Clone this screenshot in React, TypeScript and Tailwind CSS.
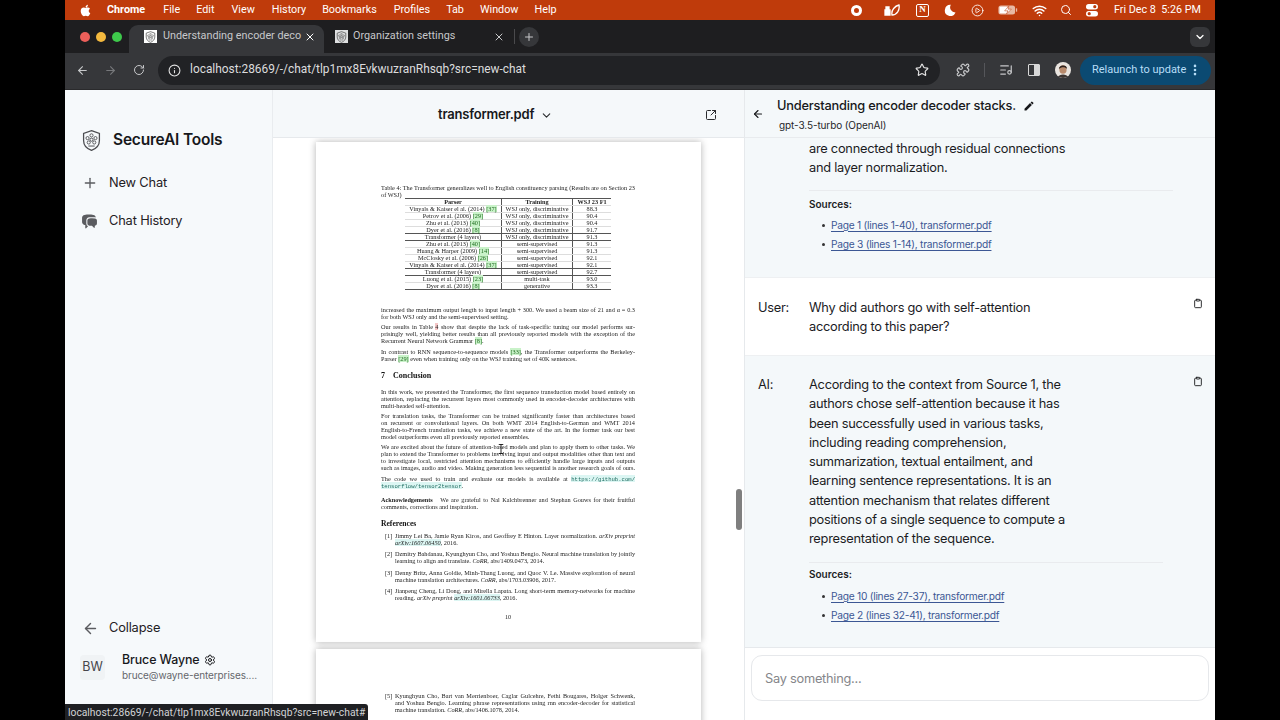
import type { ReactNode } from 'react';
import {
  ArrowLeft,
  ArrowRight,
  ChevronDown,
  CirclePlay,
  Clipboard,
  EllipsisVertical,
  Info,
  ListMusic,
  Plus,
  Puzzle,
  RotateCw,
  Search,
  Settings,
  SquareArrowOutUpRight,
  Star,
  Wifi,
  X,
} from 'lucide-react';
import { FaApple } from 'react-icons/fa';
import { MdEdit } from 'react-icons/md';
import { HiChatBubbleLeftRight } from 'react-icons/hi2';

function ShieldLogo({ className }: { className: string }) {
  return (
    <svg viewBox="0 0 24 28" className={className} fill="none" stroke="currentColor">
      <path d="M12 1.5 L22 5 V14 C22 20 17.5 24.5 12 26.5 C6.5 24.5 2 20 2 14 V5 Z" strokeWidth="1.6" />
      <circle cx="12" cy="13" r="2" strokeWidth="1.2" />
      <circle cx="12" cy="7.5" r="2" strokeWidth="1.1" />
      <circle cx="7" cy="11" r="2" strokeWidth="1.1" />
      <circle cx="17" cy="11" r="2" strokeWidth="1.1" />
      <circle cx="8.5" cy="16.5" r="2" strokeWidth="1.1" />
      <circle cx="15.5" cy="16.5" r="2" strokeWidth="1.1" />
      <path d="M8 21 H16" strokeWidth="1.2" />
    </svg>
  );
}

function MenuBar() {
  return (
    <div className="h-5 shrink-0 bg-[#bf3b0b] text-white flex items-center justify-between pl-[14px] pr-[14px] text-[10.8px] [font-family:Roboto,sans-serif]">
      <div className="flex items-center">
        <FaApple className="w-[13px] h-[13px] mr-[15px]" />
        <span className="font-bold mr-[18px]">Chrome</span>
        <span className="mr-[16px]">File</span>
        <span className="mr-[17px]">Edit</span>
        <span className="mr-[17px]">View</span>
        <span className="mr-[16px]">History</span>
        <span className="mr-[17px]">Bookmarks</span>
        <span className="mr-[16px]">Profiles</span>
        <span className="mr-[16px]">Tab</span>
        <span className="mr-[16px]">Window</span>
        <span>Help</span>
      </div>
      <div className="flex items-center">
        <span className="w-[11px] h-[11px] rounded-full border-[3px] border-white bg-[#bf3b0b] mr-[22px]" />
        <svg viewBox="0 0 16 14" className="w-[16px] h-[14px] mr-[16px]" fill="none" stroke="white" strokeWidth="1.3">
          <path d="M1 7 h5 v5 h-5 z M2 4 h3 v3 h-3 z" fill="white" />
          <path d="M8 12 C7 7 11 3 15 2 C16 7 13 12 8 12 Z" />
        </svg>
        <span className="w-[13px] h-[13px] border border-white rounded-[2px] flex items-center justify-center text-[9px] font-bold [font-family:'Liberation_Serif',serif] mr-[15px]">
          N
        </span>
        <svg viewBox="0 0 14 14" className="w-[12px] h-[12px] mr-[15px]" fill="white">
          <path d="M8 1 A6.5 6.5 0 1 0 13.5 10 A6 6 0 0 1 8 1 Z" />
        </svg>
        <CirclePlay className="w-[13px] h-[13px] mr-[14px]" strokeWidth={1.6} />
        <svg viewBox="0 0 24 12" className="w-[20px] h-[10px] mr-[14px]" fill="none">
          <rect x="0.5" y="0.5" width="20" height="11" rx="3" fill="#e8b9a4" />
          <rect x="2" y="2" width="9" height="8" rx="1" fill="white" />
          <path d="M13 1 L8 7 H12 L10 11 L16 5 H12 Z" fill="white" stroke="#bf3b0b" strokeWidth="0.6" />
          <rect x="21.5" y="4" width="1.5" height="4" fill="#e8b9a4" />
        </svg>
        <Wifi className="w-[15px] h-[15px] mr-[13px]" strokeWidth={2.4} />
        <Search className="w-[12px] h-[12px] mr-[13px]" strokeWidth={2} />
        <svg viewBox="0 0 14 14" className="w-[14px] h-[14px] mr-[15px]" fill="white">
          <rect x="1" y="1" width="12" height="5.5" rx="2.7" />
          <circle cx="9.8" cy="3.7" r="1.6" fill="#bf3b0b" />
          <rect x="1" y="8" width="12" height="5.5" rx="2.7" />
          <circle cx="4.2" cy="10.7" r="1.6" fill="#bf3b0b" />
        </svg>
        <span className="whitespace-nowrap">Fri Dec 8&nbsp; 5:26 PM</span>
      </div>
    </div>
  );
}

function TabStrip() {
  return (
    <div className="h-[33px] shrink-0 bg-[#1e1e20] flex items-end text-[#c7c8ca] text-[10.8px] pl-[15px] pr-[5px] [font-family:Roboto,sans-serif]">
      <div className="flex items-center gap-[6px] h-full mr-[7px]">
        <span className="w-[10px] h-[10px] rounded-full bg-[#ec5f5a]" />
        <span className="w-[10px] h-[10px] rounded-full bg-[#f4b93e]" />
        <span className="w-[10px] h-[10px] rounded-full bg-[#3ec94b]" />
      </div>
      <div className="w-[195px] h-[28px] bg-[#36373a] rounded-t-[9px] flex items-center pl-[15px] pr-[8px] pb-[5px]">
        <span className="w-[13px] h-[13px] bg-white flex items-center justify-center text-[#444] mr-[6px]">
          <ShieldLogo className="w-[11px] h-[12px]" />
        </span>
        <span className="whitespace-nowrap">Understanding encoder deco</span>
        <X className="w-[12px] h-[12px] ml-auto text-white" />
      </div>
      <div className="w-[190px] h-[28px] flex items-center pl-[11px] pr-[9px] pb-[5px]">
        <span className="w-[13px] h-[13px] bg-[#dfe0e1] flex items-center justify-center text-[#444] mr-[5px]">
          <ShieldLogo className="w-[11px] h-[12px]" />
        </span>
        <span className="whitespace-nowrap">Organization settings</span>
        <X className="w-[12px] h-[12px] ml-auto" />
      </div>
      <div className="h-full flex items-center">
        <span className="w-px h-[15px] bg-[#4a4a4c] mr-[4px]" />
        <span className="w-[20px] h-[20px] rounded-full bg-[#36373a] flex items-center justify-center">
          <Plus className="w-[12px] h-[12px]" />
        </span>
      </div>
      <div className="h-full flex items-center ml-auto">
        <span className="w-[20px] h-[20px] rounded-[6px] bg-[#36373a] flex items-center justify-center">
          <ChevronDown className="w-[12px] h-[12px] text-white" strokeWidth={2.5} />
        </span>
      </div>
    </div>
  );
}

function Toolbar() {
  return (
    <div className="h-[37px] shrink-0 bg-[#36373a] border-b border-[#2a2a2c] flex items-center text-[#c7c8ca] pl-[11px] pr-[3px] pb-[2px]">
      <ArrowLeft className="w-[13px] h-[13px] mr-[15px]" strokeWidth={2} />
      <ArrowRight className="w-[13px] h-[13px] mr-[16px] text-[#77787b]" strokeWidth={2} />
      <RotateCw className="w-[12px] h-[12px] mr-[13px]" strokeWidth={2} />
      <div className="w-[782px] h-[29px] rounded-full bg-[#212225] flex items-center pl-[10px] pr-[11px]">
        <Info className="w-[13px] h-[13px] mr-[9px] text-[#e3e3e3]" strokeWidth={2} />
        <span className="text-[11.9px] text-[#dcdcdd] whitespace-nowrap [font-family:Roboto,sans-serif]">
          localhost:28669/-/chat/tlp1mx8EvkwuzranRhsqb?src=new-chat
        </span>
        <Star className="w-[14px] h-[14px] ml-auto text-[#e3e3e3]" strokeWidth={2} />
      </div>
      <Puzzle className="w-[14px] h-[14px] ml-[16px] mr-[14px]" strokeWidth={2} />
      <span className="w-px h-[14px] bg-[#55565a] mr-[14px]" />
      <ListMusic className="w-[14px] h-[14px] mr-[15px]" strokeWidth={2} />
      <span className="w-[12px] h-[12px] border border-[#d8d8d8] rounded-[1px] flex justify-end mr-[15px]">
        <span className="w-[5px] h-full bg-[#d8d8d8]" />
      </span>
      <svg viewBox="0 0 16 16" className="w-[16px] h-[16px] mr-[9px]">
        <circle cx="8" cy="8" r="8" fill="#e9e4df" />
        <ellipse cx="8" cy="7.5" rx="3.6" ry="4.3" fill="#b88a6c" />
        <path d="M4 7 C3.5 2.5 12.5 2 12 7 C10.5 4.5 6 4.5 4 7 Z" fill="#2c211c" />
        <path d="M3 15 C4 11.5 12 11.5 13 15 L8 16 Z" fill="#3d3532" />
      </svg>
      <div className="w-[131px] h-[29px] rounded-full bg-[#0b4a72] text-[#b7def7] flex items-center pl-[12px] text-[11px] whitespace-nowrap [font-family:Roboto,sans-serif]">
        Relaunch to update
        <EllipsisVertical className="w-[14px] h-[14px] ml-[2px]" strokeWidth={2.5} />
      </div>
    </div>
  );
}

function Sidebar() {
  return (
    <aside className="w-[208px] shrink-0 bg-[#f6f9fb] border-r border-[#e9ecef] flex flex-col pl-[17px] relative">
      <div className="flex items-center h-[24px] mt-[38px] text-[#1b1c1f]">
        <ShieldLogo className="w-[19px] h-[23px] text-[#4b4c50]" />
        <span className="ml-[12px] text-[15.5px] tracking-[-0.2px] font-semibold text-[#17181b] whitespace-nowrap">SecureAI Tools</span>
      </div>
      <div className="flex items-center h-[20px] mt-[21px] text-[12.8px] tracking-[-0.15px] text-[#1f2023]">
        <Plus className="w-[16px] h-[16px] text-[#5b5c60]" strokeWidth={2} />
        <span className="ml-[11px]">New Chat</span>
      </div>
      <div className="flex items-center h-[20px] mt-[18px] text-[12.8px] tracking-[-0.15px] text-[#1f2023]">
        <HiChatBubbleLeftRight className="w-[17px] h-[17px] text-[#5b5c60] -ml-[1px]" />
        <span className="ml-[11px]">Chat History</span>
      </div>
      <div className="flex items-center h-[20px] mt-auto text-[12.8px] tracking-[-0.15px] text-[#1f2023]">
        <ArrowLeft className="w-[17px] h-[17px] text-[#5b5c60]" strokeWidth={2} />
        <span className="ml-[10px]">Collapse</span>
      </div>
      <div className="flex items-center h-[32px] mt-[13px] mb-[37px]">
        <span className="w-[25px] h-[25px] -ml-[2px] rounded bg-[#f0f3f5] text-[#45464a] text-[12.5px] flex items-center justify-center">
          BW
        </span>
        <div className="ml-[17px]">
          <div className="flex items-center text-[12.4px] tracking-[-0.1px] font-medium leading-[17px] text-[#17181b] whitespace-nowrap">
            Bruce Wayne
            <Settings className="w-[12px] h-[12px] ml-[5px]" strokeWidth={2} />
          </div>
          <div className="text-[10px] tracking-[-0.1px] leading-[15px] text-[#65676b] whitespace-nowrap">bruce@wayne-enterprises....</div>
        </div>
      </div>
    </aside>
  );
}

function L({ children }: { children: ReactNode }) {
  return <div className="h-[7px] leading-[7px] whitespace-nowrap [text-align:justify] [text-align-last:justify]">{children}</div>;
}

function S({ children }: { children: ReactNode }) {
  return <div className="h-[7px] leading-[7px] whitespace-nowrap">{children}</div>;
}

function G({ children }: { children: ReactNode }) {
  return <span className="bg-[#c9f2c9] text-[#1d6b1d]">{children}</span>;
}

function C({ children }: { children: ReactNode }) {
  return <span className="bg-[#dcf6f3]">{children}</span>;
}

const tableRows = [
  ['Vinyals & Kaiser el al. (2014) ', '37', 'WSJ only, discriminative', '88.3', ''],
  ['Petrov et al. (2006) ', '29', 'WSJ only, discriminative', '90.4', ''],
  ['Zhu et al. (2013) ', '40', 'WSJ only, discriminative', '90.4', ''],
  ['Dyer et al. (2016) ', '8', 'WSJ only, discriminative', '91.7', ''],
  ['Transformer (4 layers)', '', 'WSJ only, discriminative', '91.3', 'line'],
  ['Zhu et al. (2013) ', '40', 'semi-supervised', '91.3', 'line'],
  ['Huang & Harper (2009) ', '14', 'semi-supervised', '91.3', ''],
  ['McClosky et al. (2006) ', '26', 'semi-supervised', '92.1', ''],
  ['Vinyals & Kaiser el al. (2014) ', '37', 'semi-supervised', '92.1', ''],
  ['Transformer (4 layers)', '', 'semi-supervised', '92.7', 'line'],
  ['Luong et al. (2015) ', '23', 'multi-task', '93.0', 'line'],
  ['Dyer et al. (2016) ', '8', 'generative', '93.3', ''],
];

function ParseTable() {
  return (
    <div className="w-[206px] ml-[24px] mt-[0.5px] border-b border-[#555] text-center leading-[6px]">
      <div className="grid grid-cols-[97px_71px_38px] h-[7px] border-t border-[#555] font-bold">
        <span className="border-r border-[#555]">Parser</span>
        <span className="border-r border-[#555]">Training</span>
        <span>WSJ 23 F1</span>
      </div>
      {tableRows.map((row, i) => (
        <div
          key={i}
          className={
            row[4] === 'line'
              ? 'grid grid-cols-[97px_71px_38px] h-[7px] border-t border-[#555] whitespace-nowrap'
              : 'grid grid-cols-[97px_71px_38px] h-[7px] border-t border-[#ddd] whitespace-nowrap'
          }
        >
          <span className="border-r border-[#555]">
            {row[0]}
            {row[1] && <G>[{row[1]}]</G>}
          </span>
          <span className="border-r border-[#555]">{row[2]}</span>
          <span>{row[3]}</span>
        </div>
      ))}
    </div>
  );
}

function Ref({ n, first, children }: { n: string; first: ReactNode; children: ReactNode }) {
  return (
    <div className="flex">
      <span className="w-[14px] pl-[4px] shrink-0 leading-[7px]">[{n}]</span>
      <div className="flex-1 min-w-0">
        <L>{first}</L>
        {children}
      </div>
    </div>
  );
}

function PdfPanel() {
  return (
    <main className="w-[471px] shrink-0 flex flex-col relative overflow-hidden bg-white">
      <div className="h-[48px] shrink-0 bg-[#f5f8fa] border-b border-[#e6e9ec] flex items-center pl-[165px] pt-[3px] relative">
        <span className="text-[13px] tracking-[-0.2px] font-semibold text-[#17181b]">transformer.pdf</span>
        <ChevronDown className="w-[13px] h-[13px] ml-[6px] text-[#2a2b2e]" />
        <SquareArrowOutUpRight className="w-[12px] h-[12px] absolute right-[27px] top-[19px] text-[#2a2b2e]" strokeWidth={2} />
      </div>
      <div className="flex-1 overflow-hidden pt-[4px] [font-family:'Liberation_Serif',serif] text-[6.25px] text-[#1c1c1c]">
        <div className="w-[385px] h-[500px] mx-auto bg-white shadow-[0_0_7px_rgba(0,0,0,0.3)] pl-[65px] pr-[66px] pt-[41.5px] blur-[0.25px]">
          <L>Table 4: The Transformer generalizes well to English constituency parsing (Results are on Section 23</L>
          <S>of WSJ)</S>
          <ParseTable />
          <div className="mt-[16px]">
            <L>increased the maximum output length to input length + 300. We used a beam size of 21 and α = 0.3</L>
            <S>for both WSJ only and the semi-supervised setting.</S>
          </div>
          <div className="mt-[3px]">
            <L>Our results in Table <span className="bg-[#f5c6c6]">4</span> show that despite the lack of task-specific tuning our model performs sur-</L>
            <L>prisingly well, yielding better results than all previously reported models with the exception of the</L>
            <S>Recurrent Neural Network Grammar <G>[8]</G>.</S>
          </div>
          <div className="mt-[4px]">
            <L>In contrast to RNN sequence-to-sequence models <G>[33]</G>, the Transformer outperforms the Berkeley-</L>
            <S>Parser <G>[29]</G> even when training only on the WSJ training set of 40K sentences.</S>
          </div>
          <div className="mt-[9px] h-[9px] leading-[10px] text-[8px] font-bold text-[#111]">
            7<span className="ml-[8px]">Conclusion</span>
          </div>
          <div className="mt-[8px]">
            <L>In this work, we presented the Transformer, the first sequence transduction model based entirely on</L>
            <L>attention, replacing the recurrent layers most commonly used in encoder-decoder architectures with</L>
            <S>multi-headed self-attention.</S>
          </div>
          <div className="mt-[3px]">
            <L>For translation tasks, the Transformer can be trained significantly faster than architectures based</L>
            <L>on recurrent or convolutional layers. On both WMT 2014 English-to-German and WMT 2014</L>
            <L>English-to-French translation tasks, we achieve a new state of the art. In the former task our best</L>
            <S>model outperforms even all previously reported ensembles.</S>
          </div>
          <div className="mt-[3px]">
            <L>We are excited about the future of attention-based models and plan to apply them to other tasks. We</L>
            <L>plan to extend the Transformer to problems involving input and output modalities other than text and</L>
            <L>to investigate local, restricted attention mechanisms to efficiently handle large inputs and outputs</L>
            <L>such as images, audio and video. Making generation less sequential is another research goals of ours.</L>
          </div>
          <div className="mt-[4px]">
            <L>The code we used to train and evaluate our models is available at <C><span className="[font-family:'Liberation_Mono',monospace] text-[5.6px] text-[#1d6b5f]">https://github.com/</span></C></L>
            <S><C><span className="[font-family:'Liberation_Mono',monospace] text-[5.6px] text-[#1d6b5f]">tensorflow/tensor2tensor</span></C>.</S>
          </div>
          <div className="mt-[7px]">
            <L><b>Acknowledgements</b> &nbsp; We are grateful to Nal Kalchbrenner and Stephan Gouws for their fruitful</L>
            <S>comments, corrections and inspiration.</S>
          </div>
          <div className="mt-[9px] h-[9px] leading-[10px] text-[7.6px] font-bold text-[#111]">References</div>
          <div className="mt-[4px]">
            <Ref n="1" first={<>Jimmy Lei Ba, Jamie Ryan Kiros, and Geoffrey E Hinton. Layer normalization. <i>arXiv preprint</i></>}>
              <S><C><i>arXiv:1607.06450</i></C>, 2016.</S>
            </Ref>
          </div>
          <div className="mt-[4px]">
            <Ref n="2" first="Dzmitry Bahdanau, Kyunghyun Cho, and Yoshua Bengio. Neural machine translation by jointly">
              <S>learning to align and translate. <i>CoRR</i>, abs/1409.0473, 2014.</S>
            </Ref>
          </div>
          <div className="mt-[5px]">
            <Ref n="3" first="Denny Britz, Anna Goldie, Minh-Thang Luong, and Quoc V. Le. Massive exploration of neural">
              <S>machine translation architectures. <i>CoRR</i>, abs/1703.03906, 2017.</S>
            </Ref>
          </div>
          <div className="mt-[4px]">
            <Ref n="4" first={<>Jianpeng Cheng, Li Dong, and Mirella Lapata. Long short-term memory-networks for machine</>}>
              <S>reading. <i>arXiv preprint</i> <C><i>arXiv:1601.06733</i></C>, 2016.</S>
            </Ref>
          </div>
          <div className="mt-[12px] h-[7px] leading-[7px] text-center">10</div>
        </div>
        <div className="w-[385px] h-[300px] mt-[7px] mx-auto bg-white shadow-[0_0_7px_rgba(0,0,0,0.3)] pl-[65px] pr-[66px] pt-[42.5px] blur-[0.25px]">
          <Ref n="5" first="Kyunghyun Cho, Bart van Merrienboer, Caglar Gulcehre, Fethi Bougares, Holger Schwenk,">
            <L>and Yoshua Bengio. Learning phrase representations using rnn encoder-decoder for statistical</L>
            <S>machine translation. <i>CoRR</i>, abs/1406.1078, 2014.</S>
          </Ref>
        </div>
      </div>
      {/* scrollbar thumb and text cursor float over the page */}
      <span className="absolute left-[463px] top-[399px] w-[6px] h-[41px] rounded-full bg-[#7f7f7f]" />
      <svg viewBox="0 0 8 14" className="absolute left-[225px] top-[353px] w-[6px] h-[12px]" fill="none" stroke="#111" strokeWidth="1.2">
        <path d="M1 1 H7 M4 1 V13 M1 13 H7" />
      </svg>
    </main>
  );
}

function Source({ label }: { label: string }) {
  return (
    <li className="h-[19.5px] leading-[19.5px] flex items-center">
      <span className="w-[3px] h-[3px] rounded-full bg-[#333] ml-[13px] mr-[6px]" />
      <span className="text-[#3c5794] underline underline-offset-2 text-[10.2px] tracking-[-0.25px]">{label}</span>
    </li>
  );
}

function ChatPanel() {
  return (
    <section className="flex-1 min-w-0 flex flex-col bg-white border-l border-[#e6e9ec] text-[12.8px] tracking-[-0.25px] text-[#1b1c1f]">
      <div className="h-[48px] shrink-0 bg-[#f4f8fa] border-b border-[#e8ebee] flex items-center pl-[7px]">
        <ArrowLeft className="w-[12px] h-[12px] mt-[1px] text-[#17181b]" strokeWidth={2.2} />
        <div className="ml-[13px]">
          <div className="flex items-center h-[24px] text-[12.8px] tracking-[-0.2px] font-medium text-[#17181b] whitespace-nowrap">
            Understanding encoder decoder stacks.
            <MdEdit className="w-[12px] h-[12px] ml-[7px]" />
          </div>
          <div className="pl-[2px] -mt-[1px] text-[10px] tracking-[-0.1px] leading-[16px] text-[#26272a]">gpt-3.5-turbo (OpenAI)</div>
        </div>
      </div>
      <div className="flex-1 overflow-hidden flex flex-col">
        <div className="h-[140px] shrink-0 bg-[#f4f8fa] pl-[64px] pt-[1px] border-b border-[#eef0f2]">
          <p className="leading-[19.3px] w-[262px]">
            are connected through residual connections and layer normalization.
          </p>
          <div className="mr-[42px] mt-[12px] border-t border-[#e9ebee]" />
          <div className="mt-[6px] text-[10px] tracking-normal font-semibold leading-[14px]">Sources:</div>
          <ul className="mt-[5px]">
            <Source label="Page 1 (lines 1-40), transformer.pdf" />
            <Source label="Page 3 (lines 1-14), transformer.pdf" />
          </ul>
        </div>
        <div className="h-[78px] shrink-0 bg-white border-b border-[#eef0f2] flex pl-[13px] pr-[12px] pt-[20px]">
          <span className="w-[51px] shrink-0 leading-[19.3px]">User:</span>
          <p className="leading-[19.3px] w-[262px]">Why did authors go with self-attention according to this paper?</p>
          <Clipboard className="w-[10px] h-[11px] ml-auto" strokeWidth={2.2} />
        </div>
        <div className="h-[292px] shrink-0 bg-[#f4f8fa] border-b border-[#e6e9ec] flex pl-[13px] pr-[12px] pt-[19px]">
          <span className="w-[51px] shrink-0 leading-[19.3px]">AI:</span>
          <div className="flex-1 min-w-0">
            <p className="leading-[19.3px] w-[262px]">
              According to the context from Source 1, the authors chose self-attention because it has been successfully used in various tasks, including reading comprehension, summarization, textual entailment, and learning sentence representations. It is an attention mechanism that relates different positions of a single sequence to compute a representation of the sequence.
            </p>
            <div className="mr-[30px] mt-[13px] border-t border-[#e9ebee]" />
            <div className="mt-[4px] text-[10px] tracking-normal font-semibold leading-[14px]">Sources:</div>
            <ul className="mt-[6px]">
              <Source label="Page 10 (lines 27-37), transformer.pdf" />
              <Source label="Page 2 (lines 32-41), transformer.pdf" />
            </ul>
          </div>
          <Clipboard className="w-[10px] h-[11px] mt-[1px] shrink-0" strokeWidth={2.2} />
        </div>
        <div className="flex-1 bg-white px-[6px] pt-[7px]">
          <div className="h-[46px] rounded-[11px] border border-[#e6e8eb] flex items-center pl-[13px] pt-[1px] text-[#85868a]">
            Say something...
          </div>
        </div>
      </div>
    </section>
  );
}

export default function App() {
  return (
    <div className="w-[1280px] h-[720px] bg-black flex justify-center overflow-hidden [font-family:Inter,sans-serif]">
      <div className="w-[1150px] h-full flex flex-col relative">
        <MenuBar />
        <TabStrip />
        <Toolbar />
        <div className="flex-1 min-h-0 flex">
          <Sidebar />
          <PdfPanel />
          <ChatPanel />
        </div>
        <div className="absolute left-0 bottom-0 w-[303px] h-[16px] rounded-tr-[3px] bg-[#1f2023] text-[#d3d4d6] text-[10.3px] leading-[17px] pl-[3px] whitespace-nowrap [font-family:Roboto,sans-serif]">
          localhost:28669/-/chat/tlp1mx8EvkwuzranRhsqb?src=new-chat#
        </div>
      </div>
    </div>
  );
}
